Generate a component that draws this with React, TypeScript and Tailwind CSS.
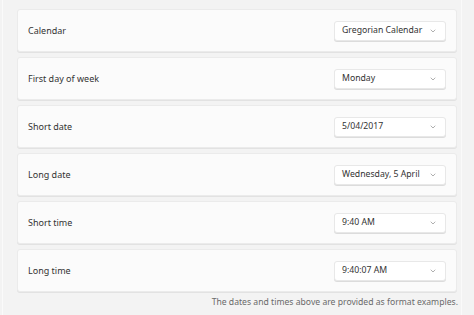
import React from "react";

const rows = [
  { label: "Calendar", value: "Gregorian Calendar" },
  { label: "First day of week", value: "Monday" },
  { label: "Short date", value: "5/04/2017" },
  { label: "Long date", value: "Wednesday, 5 April" },
  { label: "Short time", value: "9:40 AM" },
  { label: "Long time", value: "9:40:07 AM" },
];

function Chevron() {
  return (
    <svg width="6" height="4" viewBox="0 0 6 4" fill="none">
      <path d="M1 1 L3 3 L5 1" stroke="#9a9a9a" strokeWidth="0.8" strokeLinecap="round" strokeLinejoin="round" />
    </svg>
  );
}

export default function App() {
  return (
    <div
      className="w-[474px] h-[315px] bg-[#f3f3f3] overflow-hidden flex"
      style={{ fontFamily: '"Noto Sans", "Open Sans", sans-serif' }}
    >
      <div className="w-[3px] border-r border-[#fafafa]" />
      <div className="flex flex-col pl-[14px] pt-[9px]">
        <div className="w-[440px] flex flex-col gap-[5px]">
          {rows.map((r) => (
            <div
              key={r.label}
              className="h-[43px] bg-[#fbfbfb] border border-[#ebebeb] rounded-[3px] shadow-[0_1px_0_#e2e2e2] flex items-center justify-between pl-[10px] pr-[10px]"
            >
              <span className="text-[9px] text-[#333333]">{r.label}</span>
              <div className="w-[112px] h-[20px] bg-white border border-[#e8e8e8] rounded-[3px] shadow-[0_1px_0_#dcdcdc] flex items-center justify-between pl-[7px] pr-[9px]">
                <span className="text-[8.7px] text-[#333333]">{r.value}</span>
                <Chevron />
              </div>
            </div>
          ))}
        </div>
        <div className="w-[441px] text-right text-[8.65px] text-[#6a6a6a] mt-[4px]">
          The dates and times above are provided as format examples.
        </div>
      </div>
      <div className="ml-[3px] w-[1px] h-full bg-[#fafafa]" />
    </div>
  );
}
